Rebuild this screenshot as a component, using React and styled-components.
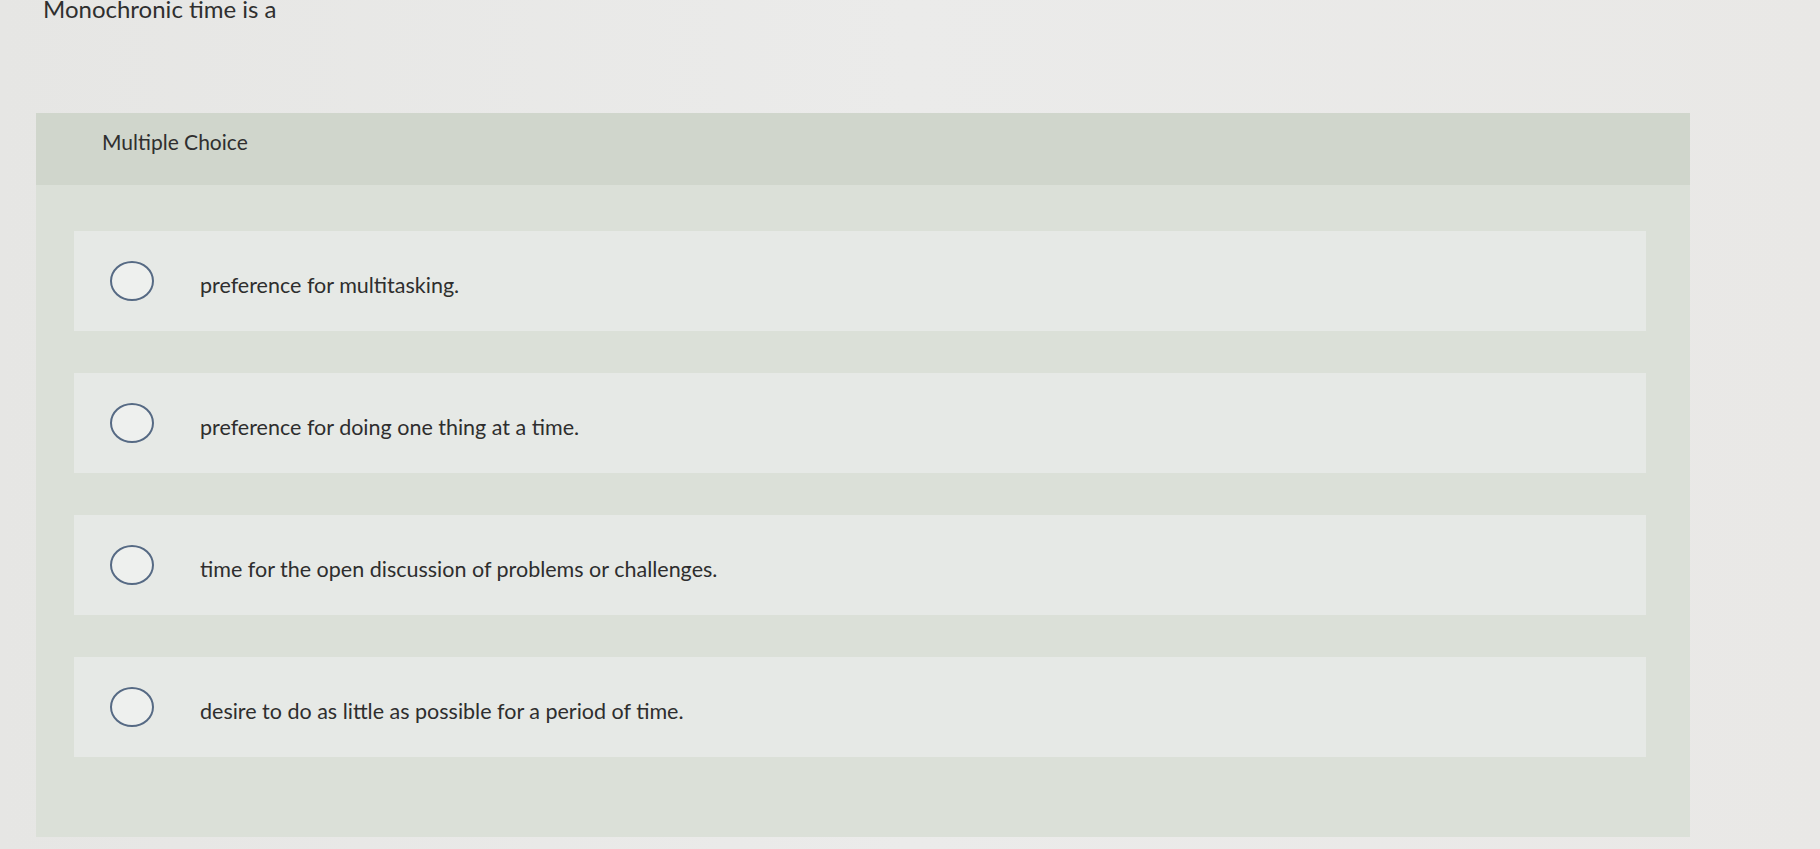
import React from "react";
import styled, { createGlobalStyle } from "styled-components";

const Global = createGlobalStyle`
  html, body { margin: 0; padding: 0; }
  body {
    background: #e8e8e6;
    font-family: Lato, "Open Sans", "Liberation Sans", sans-serif;
    color: #353535;
    width: 1820px;
    height: 849px;
    overflow: hidden;
  }
`;

const Page = styled.div`
  display: flex;
  flex-direction: column;
  padding: 0 130px 0 36px;
  background: linear-gradient(90deg, #e6e6e4 0%, #ebebea 50%, #e9e8e6 100%);
  height: 849px;
  box-sizing: border-box;
`;

const Question = styled.div`
  font-size: 24px;
  line-height: 26px;
  margin: -4px 0 0 7px;
  height: 26px;
  color: #2f2f2f;
`;

const Panel = styled.section`
  margin-top: 91px;
  background: #dbe0d8;
  height: 724px;
  display: flex;
  flex-direction: column;
`;

const Header = styled.div`
  height: 72px;
  box-sizing: border-box;
  background: #d0d6cc;
  padding: 16px 0 0 66px;
  font-size: 21px;
  line-height: 26px;
  color: #2f2f2f;
`;

const List = styled.div`
  display: flex;
  flex-direction: column;
  gap: 42px;
  padding: 46px 44px 0 38px;
`;

const Option = styled.div`
  height: 100px;
  background: #e6e9e6;
  display: flex;
  align-items: center;
  padding-left: 36px;
`;

const Radio = styled.span`
  width: 44px;
  height: 40px;
  border-radius: 50%;
  border: 2.5px solid #566a84;
  background: #eef0ee;
  flex-shrink: 0;
  box-sizing: border-box;
`;

const Label = styled.span`
  margin-left: 46px;
  font-size: 21.5px;
  color: #2e2e2e;
  padding-top: 8px;
`;

const options = [
  "preference for multitasking.",
  "preference for doing one thing at a time.",
  "time for the open discussion of problems or challenges.",
  "desire to do as little as possible for a period of time.",
];

export default function App() {
  return (
    <>
      <Global />
      <Page>
        <Question>Monochronic time is a</Question>
        <Panel>
          <Header>Multiple Choice</Header>
          <List>
            {options.map((o) => (
              <Option key={o}>
                <Radio />
                <Label>{o}</Label>
              </Option>
            ))}
          </List>
        </Panel>
      </Page>
    </>
  );
}
